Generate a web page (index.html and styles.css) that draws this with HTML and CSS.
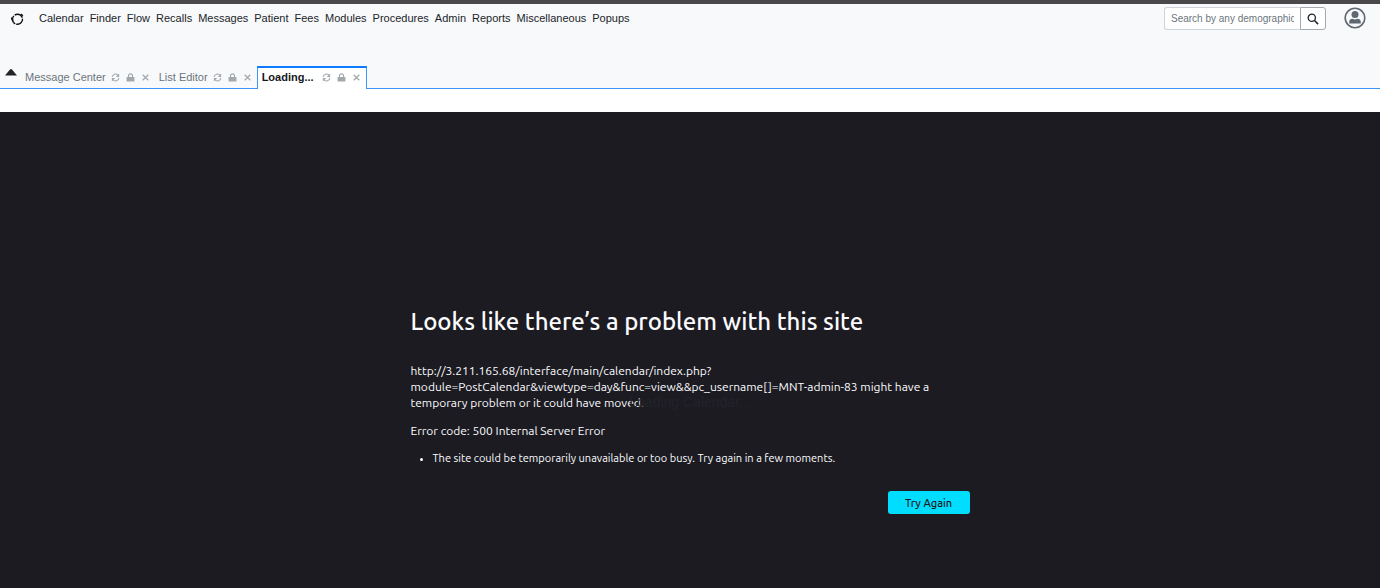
FILE: index.html
```html
<!DOCTYPE html>
<html lang="en">
<head>
<meta charset="utf-8">
<title>Loading...</title>
<link rel="stylesheet" href="styles.css">
</head>
<body>
<svg class="defs" aria-hidden="true">
  <symbol id="sync" viewBox="0 0 16 16"><path d="M2 7a6 6 0 0 1 10.500-3M14 9a6 6 0 0 1-10.500 3" fill="none" stroke="currentColor" stroke-width="2"/><path d="M14.500 1v6h-6zM1.500 15V9h6z" fill="currentColor"/></symbol>
  <symbol id="lock" viewBox="0 0 16 16"><path d="M4.500 8V5a3.500 3.500 0 0 1 7 0v3" fill="none" stroke="currentColor" stroke-width="2"/><rect x="1" y="7" width="14" height="8" rx="1" fill="currentColor"/></symbol>
  <symbol id="close" viewBox="0 0 16 16"><path d="M3 3l10 10M13 3L3 13" fill="none" stroke="currentColor" stroke-width="2.200"/></symbol>
</svg>
<header class="topbar">
  <a class="logo" href="#" aria-label="Home"><svg viewBox="0 0 14 14"><circle cx="7.500" cy="7.300" r="5" fill="none" stroke="#111" stroke-width="1.400" stroke-dasharray="9 1"/><path d="M1.500 5.500q0 2 1.500 3M10.800 2.200q1.700.5 1.900 2" stroke="#111" stroke-width="1.300" fill="none"/></svg></a>
  <nav class="menu">
    <a href="#">Calendar</a><a href="#">Finder</a><a href="#">Flow</a><a href="#">Recalls</a><a href="#">Messages</a><a href="#">Patient</a><a href="#">Fees</a><a href="#">Modules</a><a href="#">Procedures</a><a href="#">Admin</a><a href="#">Reports</a><a href="#">Miscellaneous</a><a href="#">Popups</a>
  </nav>
  <form class="search">
    <input class="search-input" type="text" placeholder="Search by any demographics" aria-label="Search by any demographics">
    <button class="search-button" type="button" aria-label="Search"><svg viewBox="0 0 12 12"><circle cx="4.800" cy="4.800" r="3.600" fill="none" stroke="currentColor" stroke-width="1.300"/><path d="M7.500 7.500l3.600 3.600" stroke="currentColor" stroke-width="1.600"/></svg></button>
  </form>
  <button class="user" type="button" aria-label="User"><svg viewBox="0 0 22 22"><circle cx="11" cy="11" r="9.800" fill="none" stroke="currentColor" stroke-width="1.600"/><circle cx="11" cy="7.500" r="3.500" fill="currentColor"/><path d="M5.200 16.500v-1.500c0-2 1.600-3.200 3.400-3.200 1.500.8 3.300.8 4.800 0 1.800 0 3.400 1.200 3.400 3.200v1.500z" fill="currentColor"/></svg></button>
</header>
<div class="tabs">
  <button class="collapse" type="button" aria-label="Collapse"><svg viewBox="0 0 12 7"><path d="M0 6.500L5 .6q1-1 2 0l5 5.900z" fill="currentColor"/></svg></button>
  <div class="tab"><span class="tab-title">Message Center</span><button type="button" aria-label="Refresh"><svg><use href="#sync"/></svg></button><button type="button" aria-label="Lock"><svg><use href="#lock"/></svg></button><button type="button" aria-label="Close"><svg><use href="#close"/></svg></button></div>
  <div class="tab"><span class="tab-title">List Editor</span><button type="button" aria-label="Refresh"><svg><use href="#sync"/></svg></button><button type="button" aria-label="Lock"><svg><use href="#lock"/></svg></button><button type="button" aria-label="Close"><svg><use href="#close"/></svg></button></div>
  <div class="tab active"><span class="tab-title">Loading...</span><button type="button" aria-label="Refresh"><svg><use href="#sync"/></svg></button><button type="button" aria-label="Lock"><svg><use href="#lock"/></svg></button><button type="button" aria-label="Close"><svg><use href="#close"/></svg></button></div>
  <div class="tab-line"></div>
</div>
<main class="frame">
  <section class="error">
    <h1>Looks like there’s a problem with this site</h1>
    <p class="url">http://3.211.165.68/interface/main/calendar/index.php?<wbr>module=PostCalendar&amp;viewtype=day&amp;func=view&amp;&amp;pc_username[]=MNT-admin-83 might have a temporary problem or it could have moved.</p>
    <p class="code">Error code: 500 Internal Server Error</p>
    <ul><li>The site could be temporarily unavailable or too busy. Try again in a few moments.</li></ul>
    <button class="retry" type="button">Try Again</button>
  </section>
  <p class="loading">Loading Calendar...</p>
</main>
</body>
</html>
```
FILE: styles.css
```css
* { box-sizing: border-box; }
body {
  margin: 0;
  min-height: 100vh;
  display: flex;
  flex-direction: column;
  background: #fff;
  color: #212529;
  font: 11px/16px "Liberation Sans", Arial, sans-serif;
}
button { margin: 0; padding: 0; border: 0; background: none; color: inherit; font: inherit; }
svg { display: block; }
.defs { display: none; }
.topbar {
  display: flex;
  align-items: flex-start;
  height: 66px;
  padding: 3px 14px 0 10px;
  border-top: 4px solid #4a484b;
  background: #f8f9fb;
}
.logo { padding: 5px 0 0; }
.logo svg { width: 14px; height: 14px; }
.menu { display: flex; gap: 6px; padding: 3px 0 0 15px; flex: 1; }
.menu a { color: #212529; text-decoration: none; }
.search { display: flex; width: 162px; height: 23px; margin-right: 18px; }
.search-input {
  flex: 1;
  min-width: 0;
  padding: 0 6px;
  border: 1px solid #ced4da;
  border-right: 0;
  border-radius: 3px 0 0 3px;
  background: #fff;
  font: inherit;
  font-size: 10px;
}
.search-input::placeholder { color: #6c757d; opacity: 1; }
.search-button {
  display: grid;
  place-items: center;
  width: 26px;
  border: 1px solid #a3a9af;
  border-radius: 0 3px 3px 0;
  background: #fff;
}
.search-button svg { width: 12px; height: 12px; }
.user { color: #5f6770; }
.user svg { width: 22px; height: 22px; }
.tabs { display: flex; height: 23px; background: #f8f9fb; }
.collapse { display: flex; width: 21px; padding: 3px 0 0 5px; border-bottom: 1px solid #3b94fa; }
.collapse svg { width: 12px; height: 7px; }
.tab {
  display: flex;
  align-items: center;
  padding: 0 5px 0 4px;
  border-bottom: 1px solid #3b94fa;
  color: #6c757d;
}
.tab button { margin-left: 6px; color: #a3a8ad; }
.tab .tab-title + button { margin-left: 5px; }
.tab svg { width: 9px; height: 9px; }
.tab.active {
  padding: 0 5px 3px 4px;
  border: 1px solid #3b94fa;
  border-top: 2px solid #0d7bff;
  border-bottom: 0;
  background: #fff;
}
.active .tab-title { margin-right: 3px; color: #16181b; font-weight: bold; }
.tab-line { flex: 1; border-bottom: 1px solid #3b94fa; }
.frame {
  position: relative;
  flex: 1;
  margin-top: 23px;
  padding: 192px 20px 40px;
  background: #1c1b22;
  color: #fbfbfe;
  font-family: Ubuntu, "Noto Sans", sans-serif;
}
.loading {
  position: absolute;
  top: 280px;
  left: 0;
  right: 0;
  margin: 0;
  color: #222329;
  font: 14px/20px "Liberation Sans", Arial, sans-serif;
  text-align: center;
}
.error { display: flex; flex-direction: column; max-width: 559px; margin: 0 auto; }
.error h1 { margin: 0 0 23px; font-size: 24px; line-height: 36px; font-weight: 500; }
.url { margin: 0; font-size: 12px; font-weight: 450; }
.code { margin: 12px 0 11px; font-size: 12px; font-weight: 450; }
.error ul { margin: 0; padding-left: 22px; font-size: 11px; }
.retry {
  align-self: flex-end;
  width: 82px;
  height: 23px;
  margin-top: 25px;
  border-radius: 3px;
  background: #00ddff;
  color: #1c1b22;
  font-weight: 500;
}
```
